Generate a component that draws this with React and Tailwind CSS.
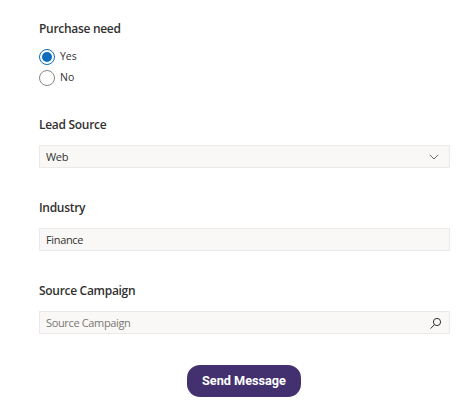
import React from "react";
import { ChevronDown } from "lucide-react";

const font = "font-['Open_Sans',sans-serif]";

function Label({ children, className = "" }) {
  return <div className={`text-[12px] tracking-[-0.3px] leading-[18px] font-semibold text-[#323130] ${className}`}>{children}</div>;
}

function Radio({ label, checked }) {
  return (
    <label className="flex items-center h-[21px]">
      <span className={`w-[16px] h-[16px] rounded-full border flex items-center justify-center ${checked ? "border-[#0f6cbd]" : "border-[#8a8886]"}`}>
        {checked && <span className="w-[10px] h-[10px] rounded-full bg-[#0f6cbd]" />}
      </span>
      <span className="ml-[5px] text-[10.5px] text-[#323130]">{label}</span>
    </label>
  );
}

function Field({ children }) {
  return (
    <div className="h-[23px] mt-[11px] flex items-center justify-between bg-[#f9f8f6] border border-[#ebeae8] pl-[6px] pr-[7px] pt-[1px] text-[11px] tracking-[-0.35px] text-[#323130]">
      {children}
    </div>
  );
}

export default function App() {
  return (
    <div className={`w-[474px] h-[410px] bg-white overflow-hidden pl-[39px] pr-[24px] pt-[20px] ${font}`}>
      <Label>Purchase need</Label>
      <div className="mt-[8px]">
        <Radio label="Yes" checked />
        <Radio label="No" />
      </div>

      <Label className="mt-[28px]">Lead Source</Label>
      <Field>
        <span>Web</span>
        <ChevronDown size={16} strokeWidth={1.2} className="text-[#484644]" />
      </Field>

      <Label className="mt-[31px]">Industry</Label>
      <Field>
        <span>Finance</span>
      </Field>

      <Label className="mt-[31px]">Source Campaign</Label>
      <Field>
        <span className="text-[#797775]">Source Campaign</span>
        <svg width="13" height="13" viewBox="0 0 13 13" fill="none" stroke="#323130" strokeWidth="1">
          <circle cx="8" cy="5" r="3.6" />
          <path d="M5.4 7.6 1.6 11.6" />
        </svg>
      </Field>

      <div className="flex justify-center mt-[31px] pr-[1px]">
        <button className="w-[114px] h-[32px] rounded-[13px] bg-[#43316f] text-white text-[12.7px] font-bold font-['Roboto',sans-serif]">
          Send Message
        </button>
      </div>
    </div>
  );
}
